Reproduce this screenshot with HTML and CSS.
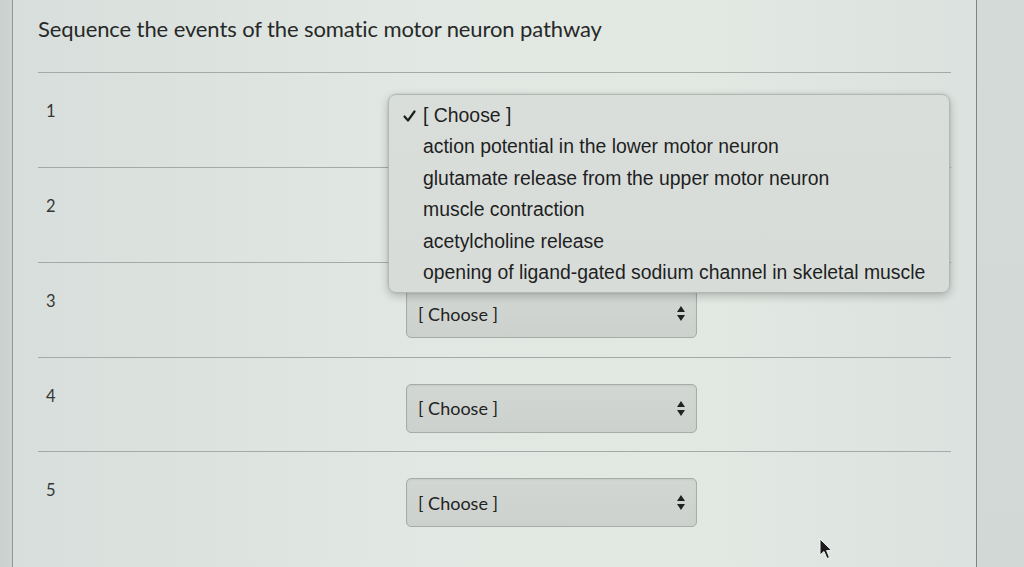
FILE: index.html
```html
<!DOCTYPE html>
<html lang="en">
<head>
<meta charset="utf-8">
<title>Sequence the events</title>
<link rel="stylesheet" href="styles.css">
</head>
<body>
<div class="screen">
  <main class="page">
    <h1 class="title">Sequence the events of the somatic motor neuron pathway</h1>
    <div class="rows">
      <div class="row"><span class="num">1</span><div class="select covered"><span>[ Choose ]</span><span class="arrows"></span></div></div>
      <div class="row"><span class="num">2</span><div class="select covered"><span>[ Choose ]</span><span class="arrows"></span></div></div>
      <div class="row"><span class="num">3</span><div class="select"><span>[ Choose ]</span><span class="arrows"></span></div></div>
      <div class="row"><span class="num">4</span><div class="select"><span>[ Choose ]</span><span class="arrows"></span></div></div>
      <div class="row"><span class="num">5</span><div class="select"><span>[ Choose ]</span><span class="arrows"></span></div></div>
    </div>
    <ul class="menu">
      <li class="checked"><svg class="check" width="13" height="12" viewBox="0 0 13 12"><path d="M1.5 6.5 L5 10.5 L11.5 1.5" fill="none" stroke="#1e1f1f" stroke-width="2.2" stroke-linecap="round" stroke-linejoin="round"/></svg>[ Choose ]</li>
      <li>action potential in the lower motor neuron</li>
      <li>glutamate release from the upper motor neuron</li>
      <li>muscle contraction</li>
      <li>acetylcholine release</li>
      <li>opening of ligand-gated sodium channel in skeletal muscle</li>
    </ul>
    <svg class="cursor" width="14" height="22" viewBox="0 0 14 22">
      <path d="M1 1 L1 17 L5 13.5 L8 20.5 L10.5 19.5 L7.6 12.6 L12.6 12.4 Z" fill="#1c1c1c" stroke="#f4f4f4" stroke-width="1"/>
    </svg>
  </main>
</div>
</body>
</html>
```

FILE: styles.css
```css
html, body {
  margin: 0;
  padding: 0;
}
body {
  background: #cfd6d3;
  font-family: Lato, "Open Sans", sans-serif;
  color: #2b2d2c;
}
.screen {
  height: 567px;
  overflow: hidden;
  padding-left: 12px;
  background: linear-gradient(90deg, #c9d0cd 0, #cdd4d1 12px, transparent 12px), linear-gradient(180deg, #d4dad7, #d1d8d5);
}
.page {
  position: relative;
  width: 913px;
  height: 567px;
  padding: 0 25px;
  box-sizing: content-box;
  border-left: 1px solid #8f9794;
  border-right: 1px solid #7e8683;
  background: linear-gradient(90deg, #d8dedb 0%, #e1e7e2 40%, #e2e8e2 70%, #dce2df 100%);
  margin: 0;
}
.title {
  margin: 0;
  height: 72px;
  box-sizing: border-box;
  padding-top: 15px;
  font-size: 22px;
  line-height: 28px;
  font-weight: 400;
  color: #272928;
  letter-spacing: -0.1px;
}
.rows {
  display: flex;
  flex-direction: column;
}
.row {
  border-top: 1px solid #a4aaa7;
  height: 94px;
  display: grid;
  grid-template-columns: 368px 291px;
  align-items: start;
}
.row:nth-child(n+3) {
  height: 93.5px;
}
.row:last-child {
  height: 120px;
}
.num {
  padding: 28px 0 0 8px;
  font-size: 16.5px;
  line-height: 20px;
  color: #353736;
}
.select {
  margin-top: 26px;
  height: 49px;
  box-sizing: border-box;
  border: 1px solid #a7aca9;
  border-radius: 5px;
  background: linear-gradient(180deg, #d3d7d4, #cdd1ce);
  box-shadow: inset 0 1px 2px rgba(0,0,0,0.06);
  display: flex;
  align-items: center;
  justify-content: space-between;
  padding: 0 11px 0 11px;
  font-size: 18px;
  color: #222;
}
.select.covered span {
  visibility: hidden;
}
.arrows {
  width: 8px;
  height: 15px;
  position: relative;
}
.arrows::before, .arrows::after {
  content: "";
  position: absolute;
  left: 0;
  border-left: 4px solid transparent;
  border-right: 4px solid transparent;
}
.arrows::before {
  top: 0;
  border-bottom: 6px solid #222;
}
.arrows::after {
  bottom: 0;
  border-top: 6px solid #222;
}
.menu {
  position: absolute;
  left: 375px;
  top: 94px;
  width: 562px;
  height: 199px;
  box-sizing: border-box;
  margin: 0;
  padding: 5px 0 0 0;
  list-style: none;
  border: 1px solid #b4b9b6;
  border-radius: 8px;
  background: linear-gradient(180deg, #dadedb, #d8dcd9);
  box-shadow: 0 3px 10px rgba(0,0,0,0.22), 0 0 2px rgba(0,0,0,0.15);
  font-family: "Liberation Sans", Arial, sans-serif;
  font-size: 19.4px;
  color: #1e1f1f;
}
.menu li {
  height: 31.4px;
  line-height: 31.4px;
  padding-left: 34px;
  position: relative;
  white-space: nowrap;
}
.check {
  position: absolute;
  left: 14px;
  top: 10px;
}
.cursor {
  position: absolute;
  left: 806px;
  top: 538px;
}
```
